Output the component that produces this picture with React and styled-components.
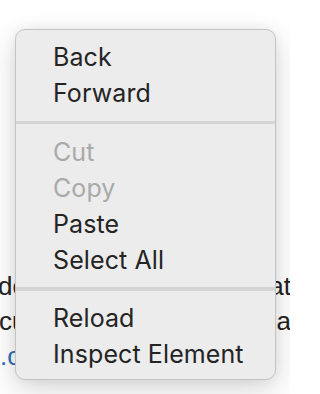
import React from "react";
import styled, { createGlobalStyle } from "styled-components";

const Global = createGlobalStyle`
  html, body { margin: 0; padding: 0; background: #ffffff; overflow: hidden; }
  body { width: 290px; height: 394px; }
`;

const Page = styled.div`
  position: relative;
  width: 290px;
  height: 394px;
  overflow: hidden;
  background: #ffffff;
  font-family: "Liberation Sans", Arial, sans-serif;
`;

const Article = styled.div`
  padding-top: 269px;
  display: flex;
  flex-direction: column;
`;

const TextLine = styled.div`
  display: flex;
  justify-content: space-between;
  height: 35px;
  line-height: 35px;
  font-size: 26px;
  color: ${(p) => (p.$link ? "#2f6db5" : "#222222")};
  white-space: nowrap;
`;

const Frag = styled.span`
  margin-left: ${(p) => p.$offset || 0}px;
  margin-right: ${(p) => p.$right || 0}px;
`;

const Menu = styled.div`
  position: absolute;
  left: 15px;
  top: 29px;
  width: 261px;
  box-sizing: border-box;
  padding: 9px 0 7px;
  background: #ececec;
  border: 1px solid #c4c4c4;
  border-radius: 10px;
  box-shadow: 0 10px 30px rgba(0, 0, 0, 0.16), 0 0 12px rgba(0, 0, 0, 0.06);
  font-family: Inter, "Liberation Sans", sans-serif;
`;

const Item = styled.div`
  height: 36px;
  line-height: 36px;
  padding-left: 37px;
  font-size: 25px;
  letter-spacing: 0.1px;
  color: ${(p) => (p.$disabled ? "#a9a9a9" : "#242424")};
`;

const Separator = styled.div`
  height: 3.5px;
  margin: 9.5px 0;
  background: #d4d4d4;
`;

export default function App() {
  return (
    <Page>
      <Global />
      <Article>
        <TextLine>
          <Frag $offset={-2}>do</Frag>
          <Frag $right={-1}>at</Frag>
        </TextLine>
        <TextLine>
          <Frag $offset={-1}>cu</Frag>
          <Frag $right={-1}>a</Frag>
        </TextLine>
        <TextLine $link>
          <Frag $offset={0}>.c</Frag>
        </TextLine>
      </Article>
      <Menu>
        <Item>Back</Item>
        <Item>Forward</Item>
        <Separator />
        <Item $disabled>Cut</Item>
        <Item $disabled>Copy</Item>
        <Item>Paste</Item>
        <Item>Select All</Item>
        <Separator />
        <Item>Reload</Item>
        <Item>Inspect Element</Item>
      </Menu>
    </Page>
  );
}
